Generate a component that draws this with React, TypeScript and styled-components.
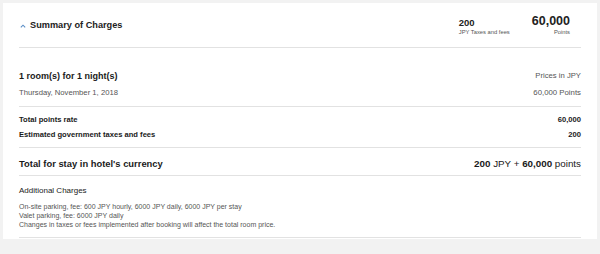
import React from 'react';
import styled, { createGlobalStyle } from 'styled-components';

const GlobalStyle = createGlobalStyle`
  body {
    margin: 0;
    background: #f2f2f2;
    font-family: "Liberation Sans", Arial, sans-serif;
    color: #222;
  }
`;

const Page = styled.div`
  padding: 3px 3px 0;
  height: 254px;
  box-sizing: border-box;
`;

const Card = styled.div`
  background: #fff;
  padding: 0 16px 1px;
`;

const Header = styled.div`
  display: flex;
  align-items: center;
  height: 44px;
  border-bottom: 1px solid #e2e2e2;
`;

const Title = styled.div`
  display: flex;
  align-items: center;
  gap: 4px;
  padding-left: 1px;
  font-size: 9.2px;
  font-weight: bold;
  color: #222;

  svg {
    margin-top: 2px;
  }
`;

const Summary = styled.div`
  margin-left: auto;
  margin-right: 11px;
  display: flex;
  align-items: flex-start;
  gap: 22px;
`;

const SummaryItem = styled.div<{ $right?: boolean }>`
  display: flex;
  flex-direction: column;
  align-items: ${(p) => (p.$right ? 'flex-end' : 'flex-start')};
`;

const SummaryValue = styled.span<{ $big?: boolean }>`
  font-weight: bold;
  font-size: ${(p) => (p.$big ? '12.5px' : '9.5px')};
  line-height: ${(p) => (p.$big ? '13px' : '10px')};
  margin-top: ${(p) => (p.$big ? '0' : '3px')};
  color: #222;
`;

const SummaryLabel = styled.span`
  font-size: 5.8px;
  line-height: 8px;
  color: #555;
`;

const Section = styled.div<{ $pt: number; $pb: number }>`
  padding: ${(p) => p.$pt}px 0 ${(p) => p.$pb}px;
  border-bottom: 1px solid #e2e2e2;
`;

const Row = styled.div<{ $lh: number; $mt?: number }>`
  display: flex;
  justify-content: space-between;
  align-items: center;
  line-height: ${(p) => p.$lh}px;
  margin-top: ${(p) => p.$mt ?? 0}px;
`;

const Text = styled.span<{ $size: number; $bold?: boolean; $muted?: boolean }>`
  font-size: ${(p) => p.$size}px;
  font-weight: ${(p) => (p.$bold ? 'bold' : 'normal')};
  color: ${(p) => (p.$muted ? '#555' : '#1a1a1a')};
`;

const Heading = styled.div`
  font-size: 8px;
  line-height: 14px;
  color: #222;
  margin-bottom: 4px;
`;

const Note = styled.div`
  font-size: 7px;
  line-height: 9px;
  color: #555;
`;

const Chevron = () => (
  <svg width="6" height="4" viewBox="0 0 6 4">
    <path d="M0.8 3.4 L3 1.2 L5.2 3.4" fill="none" stroke="#5b8ec6" strokeWidth="1.1" />
  </svg>
);

export default function App() {
  return (
    <Page>
      <GlobalStyle />
      <Card>
        <Header>
          <Title>
            <Chevron />
            Summary of Charges
          </Title>
          <Summary>
            <SummaryItem>
              <SummaryValue>200</SummaryValue>
              <SummaryLabel>JPY Taxes and fees</SummaryLabel>
            </SummaryItem>
            <SummaryItem $right>
              <SummaryValue $big>60,000</SummaryValue>
              <SummaryLabel>Points</SummaryLabel>
            </SummaryItem>
          </Summary>
        </Header>

        <Section $pt={20} $pb={5}>
          <Row $lh={16}>
            <Text $size={9} $bold>1 room(s) for 1 night(s)</Text>
            <Text $size={7.7} $muted>Prices in JPY</Text>
          </Row>
          <Row $lh={16} $mt={1}>
            <Text $size={7.7} $muted>Thursday, November 1, 2018</Text>
            <Text $size={7.8} $muted>60,000 Points</Text>
          </Row>
        </Section>

        <Section $pt={5} $pb={5}>
          <Row $lh={15}>
            <Text $size={7.6} $bold>Total points rate</Text>
            <Text $size={7.6} $bold>60,000</Text>
          </Row>
          <Row $lh={15}>
            <Text $size={7.6} $bold>Estimated government taxes and fees</Text>
            <Text $size={7.6} $bold>200</Text>
          </Row>
        </Section>

        <Section $pt={7} $pb={3}>
          <Row $lh={17}>
            <Text $size={9.4} $bold>Total for stay in hotel&apos;s currency</Text>
            <Text $size={9.8}>
              <b>200</b> JPY + <b>60,000</b> points
            </Text>
          </Row>
        </Section>

        <Section $pt={8} $pb={8}>
          <Heading>Additional Charges</Heading>
          <Note>On-site parking, fee: 600 JPY hourly, 6000 JPY daily, 6000 JPY per stay</Note>
          <Note>Valet parking, fee: 6000 JPY daily</Note>
          <Note>Changes in taxes or fees implemented after booking will affect the total room price.</Note>
        </Section>
      </Card>
    </Page>
  );
}
